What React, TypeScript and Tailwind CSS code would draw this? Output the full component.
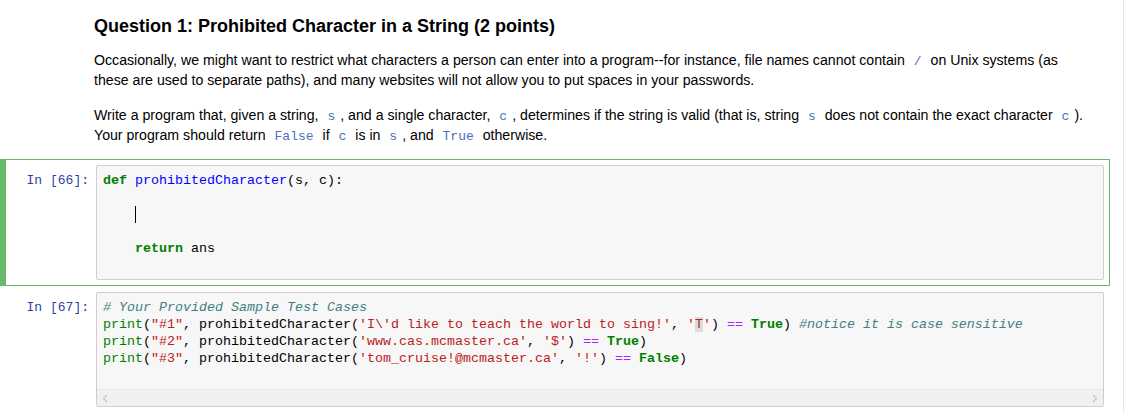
import React from "react";

const mono = "font-['Liberation_Mono','Courier_New',monospace]";

const Code = ({ children }: { children: React.ReactNode }) => (
  <code className={`${mono} text-[13px] leading-none text-[#4c6fbf] px-[5px]`}>{children}</code>
);

const Prompt = ({ n }: { n: number }) => (
  <div className={`${mono} w-[90px] shrink-0 text-right pr-[7px] pt-[7px] text-[13px] leading-[17px] text-[#303f9f]`}>
    In [{n}]:
  </div>
);

// syntax colours, the usual notebook palette
const kw = "text-[#008000] font-bold";
const bi = "text-[#008000]";
const str = "text-[#ba2121]";
const op = "text-[#aa22ff]";
const cm = "text-[#408080] italic";

const App = () => {
  return (
    <div className="w-[1126px] h-[412px] bg-white overflow-hidden flex font-['Liberation_Sans',Arial,sans-serif] text-black">
      <div className="w-[1124px] shrink-0 border-r border-[#e6e6e6]">
        {/* markdown cell */}
        <div className="pl-[94px] pr-[20px] h-[153px]">
          <h3 className="pt-[15px] text-[18px] leading-[22px] font-bold">
            Question 1: Prohibited Character in a String (2 points)
          </h3>
          <p className="mt-[13px] text-[14.15px] leading-[20px]">
            Occasionally, we might want to restrict what characters a person can enter into a program--for instance, file
            names cannot contain <Code>/</Code> on Unix systems (as
            <br />
            these are used to separate paths), and many websites will not allow you to put spaces in your passwords.
          </p>
          <p className="mt-[15px] text-[14.15px] leading-[20px]">
            Write a program that, given a string, <Code>s</Code>, and a single character, <Code>c</Code>, determines if the
            string is valid (that is, string <Code>s</Code> does not contain the exact character <Code>c</Code>).
            <br />
            Your program should return <Code>False</Code> if <Code>c</Code> is in <Code>s</Code>, and <Code>True</Code>{" "}
            otherwise.
          </p>
        </div>

        {/* selected code cell, edit mode */}
        <div className="relative w-[1110px] mt-[6px] border border-solid [border-color:#66bb6a] p-[5px] flex">
          <div className="absolute left-[-1px] top-[-1px] bottom-[-1px] w-[6px] bg-[#66bb6a]" />
          <Prompt n={66} />
          <div className="flex-1 h-[115px] bg-[#f7f7f7] border border-[#cfcfcf] rounded-[2px] pl-[6px] pt-[6px]">
            <pre className={`${mono} text-[13.33px] leading-[17px]`}>
              <div>
                <span className={kw}>def</span> <span className="text-[#0000ff]">prohibitedCharacter</span>(s, c):
              </div>
              <div>&nbsp;</div>
              <div className="relative">
                &nbsp;
                <span className="absolute left-[32px] top-0 w-px h-[17px] bg-black" />
              </div>
              <div>&nbsp;</div>
              <div>
                {"    "}
                <span className={kw}>return</span> ans
              </div>
            </pre>
          </div>
        </div>

        {/* second code cell */}
        <div className="w-[1110px] border border-transparent p-[5px] flex">
          <Prompt n={67} />
          <div className="flex-1 h-[115px] bg-[#f7f7f7] border border-[#cfcfcf] rounded-[2px] flex flex-col">
            <pre className={`${mono} flex-1 text-[13.33px] leading-[17px] pl-[6px] pt-[6px] overflow-hidden`}>
              <div className={cm}># Your Provided Sample Test Cases</div>
              <div>
                <span className={bi}>print</span>(<span className={str}>"#1"</span>, prohibitedCharacter(
                <span className={str}>'I\'d like to teach the world to sing!'</span>,{" "}
                <span className={str}>
                  '<span className="bg-[#dcdcdc]">T</span>'
                </span>
                ) <span className={op}>==</span> <span className={kw}>True</span>){" "}
                <span className={cm}>#notice it is case sensitive</span>
              </div>
              <div>
                <span className={bi}>print</span>(<span className={str}>"#2"</span>, prohibitedCharacter(
                <span className={str}>'www.cas.mcmaster.ca'</span>, <span className={str}>'$'</span>){" "}
                <span className={op}>==</span> <span className={kw}>True</span>)
              </div>
              <div>
                <span className={bi}>print</span>(<span className={str}>"#3"</span>, prohibitedCharacter(
                <span className={str}>'tom_cruise!@mcmaster.ca'</span>, <span className={str}>'!'</span>){" "}
                <span className={op}>==</span> <span className={kw}>False</span>)
              </div>
            </pre>
            <div className="h-[17px] bg-[#f0f0f0] border-t border-[#e8e8e8] flex items-center justify-between px-[5px] text-[#c4c4c4]">
              <svg width="6" height="9" viewBox="0 0 6 9" fill="none" stroke="currentColor" strokeWidth="1.2">
                <path d="M5 1 L1.5 4.5 L5 8" />
              </svg>
              <svg width="6" height="9" viewBox="0 0 6 9" fill="none" stroke="currentColor" strokeWidth="1.2">
                <path d="M1 1 L4.5 4.5 L1 8" />
              </svg>
            </div>
          </div>
        </div>
      </div>
    </div>
  );
};

export default App;
